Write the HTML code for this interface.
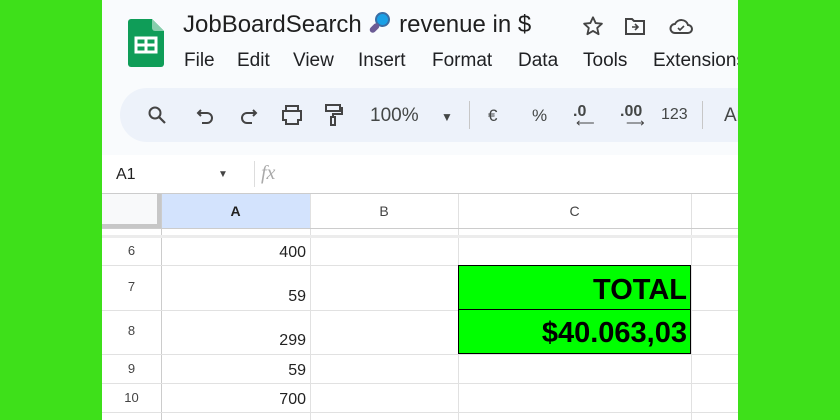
<!DOCTYPE html><html><head><style>
body{margin:0;width:840px;height:420px;background:#3ee01a;position:relative;overflow:hidden;font-family:"Liberation Sans",Arial,sans-serif}
.app{position:absolute;left:102px;top:0;width:636px;height:420px;background:#f9fbfd;overflow:hidden}
.a{position:absolute}
.menu span{position:absolute;top:50px;font-size:19px;color:#202124}
.tb{left:18px;top:88px;width:700px;height:54px;background:#edf2fa;border-radius:27px}
.tbt{position:absolute;top:104px;color:#444746;font-size:19px}
.grid{left:0;top:155px;width:636px;height:265px;background:#fff}
.hl{position:absolute;height:1px;background:#e1e1e1}
.vl{position:absolute;width:1px;background:#e1e1e1}
.rn{position:absolute;left:0;width:59px;text-align:center;font-size:13px;color:#444}
.num{position:absolute;right:432px;font-size:16px;color:#222}
</style></head><body><div class="app">
<svg class="a" style="left:26px;top:19px" width="36" height="48" viewBox="0 0 36 48"><path d="M3 0h21l12 12v33a3 3 0 0 1-3 3H3a3 3 0 0 1-3-3V3a3 3 0 0 1 3-3z" fill="#0f9d58"/><path d="M24 0l12 12H27a3 3 0 0 1-3-3z" fill="#87ceac"/><rect x="8" y="19" width="20" height="14" fill="none" stroke="#fff" stroke-width="3"/><path d="M8 26h20M18 19v14" stroke="#fff" stroke-width="3"/></svg>
<div class="a" style="left:81px;top:11px;font-size:24px;color:#1f1f1f;white-space:nowrap">JobBoardSearch <span style="display:inline-block;width:24px;height:24px;vertical-align:-3px;position:relative"><span style="position:absolute;left:7px;top:1px;width:15px;height:15px;border-radius:50%;background:#1aa0e6;border:2px solid #3a6ea5;box-sizing:border-box"></span><span style="position:absolute;left:1px;top:14px;width:11px;height:6px;background:#6b5b95;transform:rotate(-45deg);border-radius:3px"></span></span> revenue in $</div>
<svg class="a" style="left:480px;top:15px" width="22" height="22" viewBox="0 0 24 24"><path d="M12 2.5l2.9 6.3 6.8.7-5.1 4.6 1.5 6.8L12 17.4 5.9 20.9l1.5-6.8-5.1-4.6 6.8-.7z" fill="none" stroke="#444" stroke-width="2" stroke-linejoin="round"/></svg>
<svg class="a" style="left:523px;top:17px" width="20" height="18"><path d="M1 2h6l2 2h10v13H1z" fill="none" stroke="#444" stroke-width="2"/><path d="M7 10h6M10 7l3 3-3 3" fill="none" stroke="#444" stroke-width="1.6"/></svg>
<svg class="a" style="left:567px;top:17px" width="24" height="18"><path d="M6 16h13a4 4 0 0 0 0-8 7 7 0 0 0-13-1 4.5 4.5 0 0 0 0 9z" fill="none" stroke="#444" stroke-width="2"/><path d="M9 11l2 2 4-4" fill="none" stroke="#444" stroke-width="1.6"/></svg>
<div class="menu"><span style="left:82px">File</span><span style="left:135px">Edit</span><span style="left:191px">View</span><span style="left:256px">Insert</span><span style="left:330px">Format</span><span style="left:416px">Data</span><span style="left:481px">Tools</span><span style="left:551px">Extensions</span></div>
<div class="a tb"></div>
<svg class="a" style="left:45px;top:105px" width="20" height="20"><circle cx="8" cy="8" r="5.5" fill="none" stroke="#444" stroke-width="2"/><path d="M12 12l6 6" stroke="#444" stroke-width="2.2"/></svg>
<svg class="a" style="left:94px;top:106px" width="20" height="20"><path d="M5 4L2 7l3 3" fill="none" stroke="#444" stroke-width="2"/><path d="M2 7h9a5 5 0 0 1 0 10H6" fill="none" stroke="#444" stroke-width="2"/></svg>
<svg class="a" style="left:136px;top:106px" width="20" height="20"><path d="M15 4l3 3-3 3" fill="none" stroke="#444" stroke-width="2"/><path d="M18 7H9a5 5 0 0 0 0 10h5" fill="none" stroke="#444" stroke-width="2"/></svg>
<svg class="a" style="left:179px;top:105px" width="22" height="20"><path d="M5 1h12v5H5zM2 6h18v9h-3v4H5v-4H2z" fill="none" stroke="#444" stroke-width="2"/></svg>
<svg class="a" style="left:222px;top:103px" width="20" height="24"><path d="M2 2h14v6H2zM16 5h2v6H9v3" fill="none" stroke="#444" stroke-width="2"/><rect x="7" y="14" width="4" height="8" fill="none" stroke="#444" stroke-width="2"/></svg>
<div class="tbt" style="left:268px;top:105px">100%</div><div class="tbt" style="left:339px;font-size:12px;top:110px">▼</div>
<div class="a" style="left:367px;top:101px;width:1px;height:28px;background:#c7c7c7"></div>
<div class="tbt" style="left:386px;font-size:17px;top:106px">€</div><div class="tbt" style="left:430px;font-size:17px;top:106px">%</div>
<div class="tbt" style="left:471px;font-size:16px;font-weight:bold;top:103px">.0</div><div class="a" style="left:474px;top:115px;font-size:13px;color:#444">⟵</div>
<div class="tbt" style="left:518px;font-size:16px;font-weight:bold;top:103px">.00</div><div class="a" style="left:524px;top:115px;font-size:13px;color:#444">⟶</div>
<div class="tbt" style="left:559px;font-size:16px;top:106px">123</div>
<div class="a" style="left:600px;top:101px;width:1px;height:28px;background:#c7c7c7"></div>
<div class="tbt" style="left:622px;top:105px">Ar</div>
<div class="a grid">
<div class="a" style="left:14px;top:11px;font-size:16px;color:#222">A1</div>
<div class="a" style="left:116px;top:14px;font-size:10px;color:#444">▼</div>
<div class="a" style="left:152px;top:6px;width:1px;height:26px;background:#ddd"></div>
<div class="a" style="left:159px;top:7px;font-size:20px;color:#aaa;font-style:italic;font-family:'Liberation Serif',serif">fx</div>
<div class="hl" style="left:0;top:38px;width:636px;background:#ccc"></div>
<div class="a" style="left:0;top:39px;width:59px;height:34px;background:#f8f9fa;border-right:4px solid #c7c7c7;border-bottom:4px solid #c7c7c7;box-sizing:border-box"></div>
<div class="a" style="left:59px;top:39px;width:149px;height:34px;background:#d3e3fd;font-size:14px;font-weight:bold;color:#222;text-align:center;line-height:34px">A</div>
<div class="a" style="left:208px;top:39px;width:148px;height:34px;font-size:14px;color:#444;text-align:center;line-height:34px">B</div>
<div class="a" style="left:356px;top:39px;width:233px;height:34px;font-size:14px;color:#444;text-align:center;line-height:34px">C</div>
<div class="vl" style="left:59px;top:39px;height:230px;background:#ccc"></div>
<div class="vl" style="left:208px;top:39px;height:230px"></div>
<div class="vl" style="left:356px;top:39px;height:230px"></div>
<div class="vl" style="left:589px;top:39px;height:230px"></div>
<div class="hl" style="left:0;top:73px;width:636px;background:#ccc"></div>
<div class="hl" style="left:0;top:80px;width:636px;height:3px;background:#ececec"></div>
<div class="hl" style="left:0;top:110px;width:636px"></div>
<div class="hl" style="left:0;top:155px;width:636px"></div>
<div class="hl" style="left:0;top:199px;width:636px"></div>
<div class="hl" style="left:0;top:228px;width:636px"></div>
<div class="hl" style="left:0;top:257px;width:636px"></div>
<div class="rn" style="top:88px">6</div><div class="rn" style="top:124px">7</div><div class="rn" style="top:168px">8</div><div class="rn" style="top:206px">9</div><div class="rn" style="top:235px">10</div>
<div class="num" style="top:89px">400</div><div class="num" style="top:133px">59</div><div class="num" style="top:177px">299</div><div class="num" style="top:207px">59</div><div class="num" style="top:236px">700</div>
<div class="a" style="left:356px;top:110px;width:233px;height:45px;background:#00ff00;border:1px solid #000;box-sizing:border-box;text-align:right;font-size:29px;font-weight:bold;line-height:48px;padding-right:3px">TOTAL</div>
<div class="a" style="left:356px;top:154px;width:233px;height:45px;background:#00ff00;border:1px solid #000;box-sizing:border-box;text-align:right;font-size:29px;font-weight:bold;line-height:46px;padding-right:3px">$40.063,03</div>
</div></div></body></html>
